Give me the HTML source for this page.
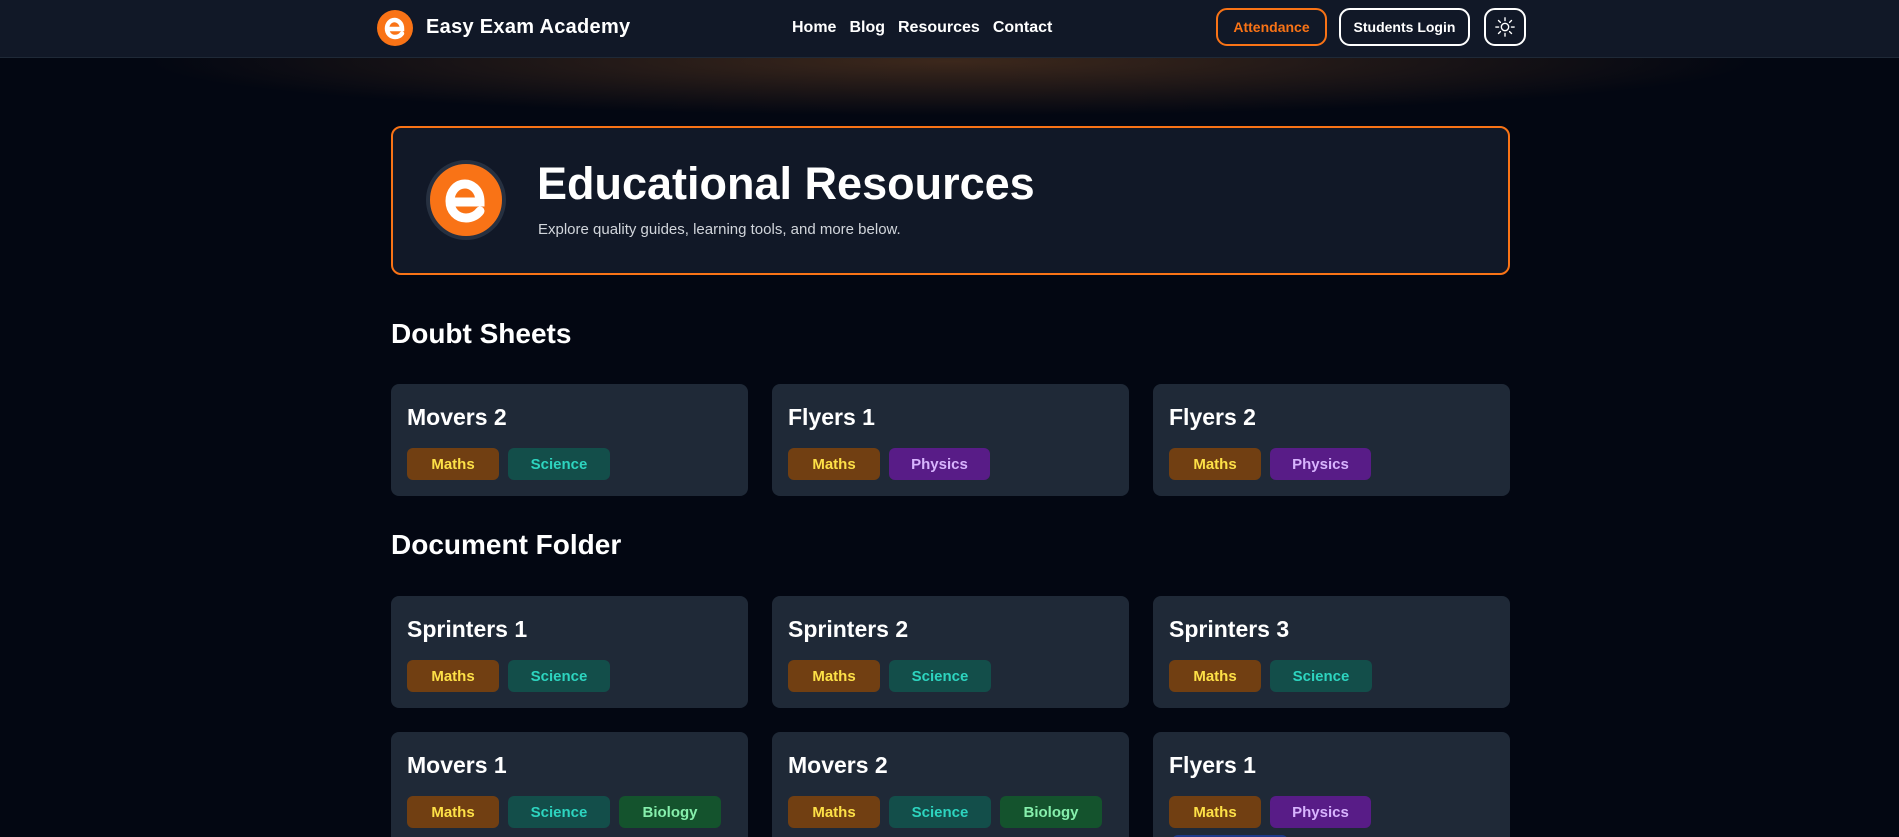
<!DOCTYPE html>
<html><head><meta charset="utf-8"><style>
*{box-sizing:border-box;margin:0;padding:0}
html,body{width:1899px;height:837px;overflow:hidden}
body{background:#030712;font-family:"Liberation Sans",sans-serif;color:#fff;position:relative}
.nav{position:absolute;left:0;top:0;width:1899px;height:58px;background:#111827;border-bottom:1px solid #1f2937;z-index:2}
.glow{position:absolute;left:150px;top:30px;width:1600px;height:90px;background:radial-gradient(ellipse 50% 60% at 50% 35%,rgba(130,80,40,.45),rgba(0,0,0,0) 100%);z-index:1}
.logo{position:absolute;left:377px;top:10px;width:36px;height:36px;border-radius:50%;background:#f97316}
.brand{position:absolute;left:426px;top:16px;font-size:20px;font-weight:bold;letter-spacing:.3px}
.links{position:absolute;left:792px;top:19px;font-size:16px;font-weight:bold}
.links span{margin-right:13px}
.btn{position:absolute;top:8px;height:38px;border-radius:11px;border:2px solid #fff;font-size:14px;font-weight:bold;display:flex;align-items:center;justify-content:center}
.hero{position:absolute;left:391px;top:126px;width:1119px;height:149px;border:2px solid #f97316;border-radius:10px;background:#111827}
.hlogo{position:absolute;left:33px;top:32px;width:80px;height:80px;border-radius:50%;background:#f97316;border:4px solid #263040}
.h1{position:absolute;left:144px;top:30px;font-size:45px;font-weight:bold}
.sub{position:absolute;left:145px;top:93px;font-size:15px;color:#d1d5db}
.h2{position:absolute;left:391px;font-size:28px;font-weight:bold}
.card{position:absolute;width:357px;height:112px;background:#1f2937;border-radius:8px;overflow:hidden}
.card .t{position:absolute;left:16px;top:20px;font-size:23px;font-weight:bold}
.tags{position:absolute;left:16px;top:64px;display:flex;gap:9px}
.tag{height:32px;border-radius:6px;font-size:15px;font-weight:bold;display:flex;align-items:center;justify-content:center}
.m{background:#713f12;color:#fde047;width:92px}
.s{background:#134e4a;color:#2dd4bf;width:102px}
.p{background:#581c87;color:#d8b4fe;width:101px}
.b{background:#14532d;color:#86efac;width:102px}
</style></head><body>
<div class="glow"></div>
<div class="nav">
<div class="logo"><svg width="36" height="36" viewBox="0 0 36 36"><path d="M11 19 H25 C25 12 20 10 17.5 10 C13 10 10 14 10 18.5 C10 23.5 13.5 27 18 27 C21 27 23.5 25.5 25 23.5" fill="none" stroke="#fff" stroke-width="4.5" stroke-linecap="round"/></svg></div>
<div class="brand">Easy Exam Academy</div>
<div class="links"><span>Home</span><span>Blog</span><span>Resources</span><span>Contact</span></div>
<div class="btn" style="left:1216px;width:111px;border-color:#f97316;color:#f97316">Attendance</div>
<div class="btn" style="left:1339px;width:131px">Students Login</div>
<div class="btn" style="left:1484px;width:42px"><svg width="22" height="22" viewBox="0 0 24 24" fill="none" stroke="#fff" stroke-width="1.5" stroke-linecap="round"><circle cx="12" cy="12" r="4"/><path d="M12 2v3M12 19v3M2 12h3M19 12h3M4.9 4.9l2.1 2.1M17 17l2.1 2.1M4.9 19.1L7 17M17 7l2.1-2.1"/></svg></div>
</div>
<div class="hero">
<div class="hlogo"><svg width="72" height="72" viewBox="0 0 36 36"><path d="M11 19 H25 C25 12 20 10 17.5 10 C13 10 10 14 10 18.5 C10 23.5 13.5 27 18 27 C21 27 23.5 25.5 25 23.5" fill="none" stroke="#fff" stroke-width="4.5" stroke-linecap="round"/></svg></div>
<div class="h1">Educational Resources</div>
<div class="sub">Explore quality guides, learning tools, and more below.</div>
</div>
<div class="h2" style="top:318px">Doubt Sheets</div>
<div class="card" style="left:391px;top:384px"><div class="t">Movers 2</div><div class="tags"><div class="tag m">Maths</div><div class="tag s">Science</div></div></div>
<div class="card" style="left:772px;top:384px"><div class="t">Flyers 1</div><div class="tags"><div class="tag m">Maths</div><div class="tag p">Physics</div></div></div>
<div class="card" style="left:1153px;top:384px"><div class="t">Flyers 2</div><div class="tags"><div class="tag m">Maths</div><div class="tag p">Physics</div></div></div>
<div class="h2" style="top:529px">Document Folder</div>
<div class="card" style="left:391px;top:596px"><div class="t">Sprinters 1</div><div class="tags"><div class="tag m">Maths</div><div class="tag s">Science</div></div></div>
<div class="card" style="left:772px;top:596px"><div class="t">Sprinters 2</div><div class="tags"><div class="tag m">Maths</div><div class="tag s">Science</div></div></div>
<div class="card" style="left:1153px;top:596px"><div class="t">Sprinters 3</div><div class="tags"><div class="tag m">Maths</div><div class="tag s">Science</div></div></div>
<div class="card" style="left:391px;top:732px;height:105px;border-radius:8px 8px 0 0"><div class="t">Movers 1</div><div class="tags"><div class="tag m">Maths</div><div class="tag s">Science</div><div class="tag b">Biology</div></div></div>
<div class="card" style="left:772px;top:732px;height:105px;border-radius:8px 8px 0 0"><div class="t">Movers 2</div><div class="tags"><div class="tag m">Maths</div><div class="tag s">Science</div><div class="tag b">Biology</div></div></div>
<div class="card" style="left:1153px;top:732px;height:105px;border-radius:8px 8px 0 0"><div class="t">Flyers 1</div><div class="tags"><div class="tag m">Maths</div><div class="tag p">Physics</div></div><div style="position:absolute;left:19px;top:103px;width:116px;height:30px;border-radius:6px;background:#1e3a8a"></div></div>
</body></html>
